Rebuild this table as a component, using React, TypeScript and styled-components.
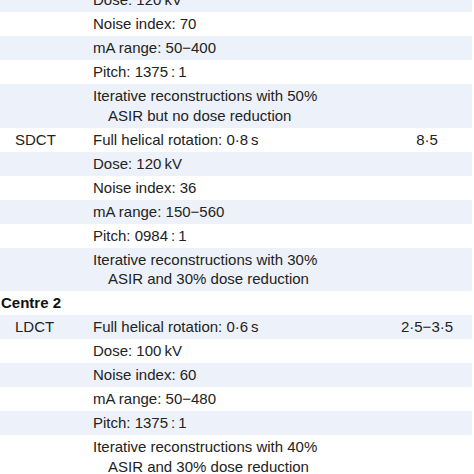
import React from 'react';
import styled, { createGlobalStyle } from 'styled-components';

interface ProtocolRow {
  kind: 'row' | 'centre';
  label?: string;
  lines: string[];
  value?: string;
}

const GlobalStyle = createGlobalStyle`
  html, body {
    margin: 0;
    padding: 0;
    background: #ffffff;
  }
  body {
    font-family: "Liberation Sans", Arial, Helvetica, sans-serif;
    color: #222222;
    overflow: hidden;
  }
`;

const Page = styled.div`
  width: 474px;
  height: 474px;
  overflow: hidden;
`;

const Table = styled.table`
  width: 472px;
  margin-top: -12px;
  border-collapse: collapse;
  table-layout: fixed;
  font-size: 15px;
  line-height: 19.5px;
`;

const Tr = styled.tr`
  background-color: #ffffff;

  &:nth-child(odd) {
    background-color: #edf2fa;
  }
`;

const Td = styled.td<{ $align?: 'left' | 'center' }>`
  padding: 2.25px 0 2.25px 15px;
  vertical-align: top;
  text-align: ${(p) => p.$align ?? 'left'};
  white-space: nowrap;

  &:last-child {
    padding-left: 0;
  }
`;

const CentreCell = styled.td`
  padding: 2.25px 0 2.25px 1px;
  font-weight: bold;
  color: #111111;
`;

const Line = styled.div<{ $hang?: boolean }>`
  padding-left: ${(p) => (p.$hang ? '15px' : '0')};
`;

const rows: ProtocolRow[] = [
  { kind: 'row', lines: ['Dose: 120\u2009kV'] },
  { kind: 'row', lines: ['Noise index: 70'] },
  { kind: 'row', lines: ['mA range: 50\u2212400'] },
  { kind: 'row', lines: ['Pitch: 1375\u2009:\u20091'] },
  { kind: 'row', lines: ['Iterative reconstructions with 50%', 'ASIR but no dose reduction'] },
  { kind: 'row', label: 'SDCT', lines: ['Full helical rotation: 0\u00b78\u2009s'], value: '8\u00b75' },
  { kind: 'row', lines: ['Dose: 120\u2009kV'] },
  { kind: 'row', lines: ['Noise index: 36'] },
  { kind: 'row', lines: ['mA range: 150\u2212560'] },
  { kind: 'row', lines: ['Pitch: 0984\u2009:\u20091'] },
  { kind: 'row', lines: ['Iterative reconstructions with 30%', 'ASIR and 30% dose reduction'] },
  { kind: 'centre', label: 'Centre 2', lines: [] },
  { kind: 'row', label: 'LDCT', lines: ['Full helical rotation: 0\u00b76\u2009s'], value: '2\u00b75\u22123\u00b75' },
  { kind: 'row', lines: ['Dose: 100\u2009kV'] },
  { kind: 'row', lines: ['Noise index: 60'] },
  { kind: 'row', lines: ['mA range: 50\u2212480'] },
  { kind: 'row', lines: ['Pitch: 1375\u2009:\u20091'] },
  { kind: 'row', lines: ['Iterative reconstructions with 40%', 'ASIR and 30% dose reduction'] },
];

const App: React.FC = () => {
  return (
    <Page>
      <GlobalStyle />
      <Table>
        <colgroup>
          <col style={{ width: 78 }} />
          <col style={{ width: 304 }} />
          <col style={{ width: 90 }} />
        </colgroup>
        <tbody>
          {rows.map((row, index) =>
            row.kind === 'centre' ? (
              <Tr key={index}>
                <CentreCell colSpan={3}>{row.label}</CentreCell>
              </Tr>
            ) : (
              <Tr key={index}>
                <Td>{row.label}</Td>
                <Td>
                  {row.lines.map((line, i) => (
                    <Line key={i} $hang={i > 0}>
                      {line}
                    </Line>
                  ))}
                </Td>
                <Td $align="center">{row.value}</Td>
              </Tr>
            )
          )}
        </tbody>
      </Table>
    </Page>
  );
};

export default App;
